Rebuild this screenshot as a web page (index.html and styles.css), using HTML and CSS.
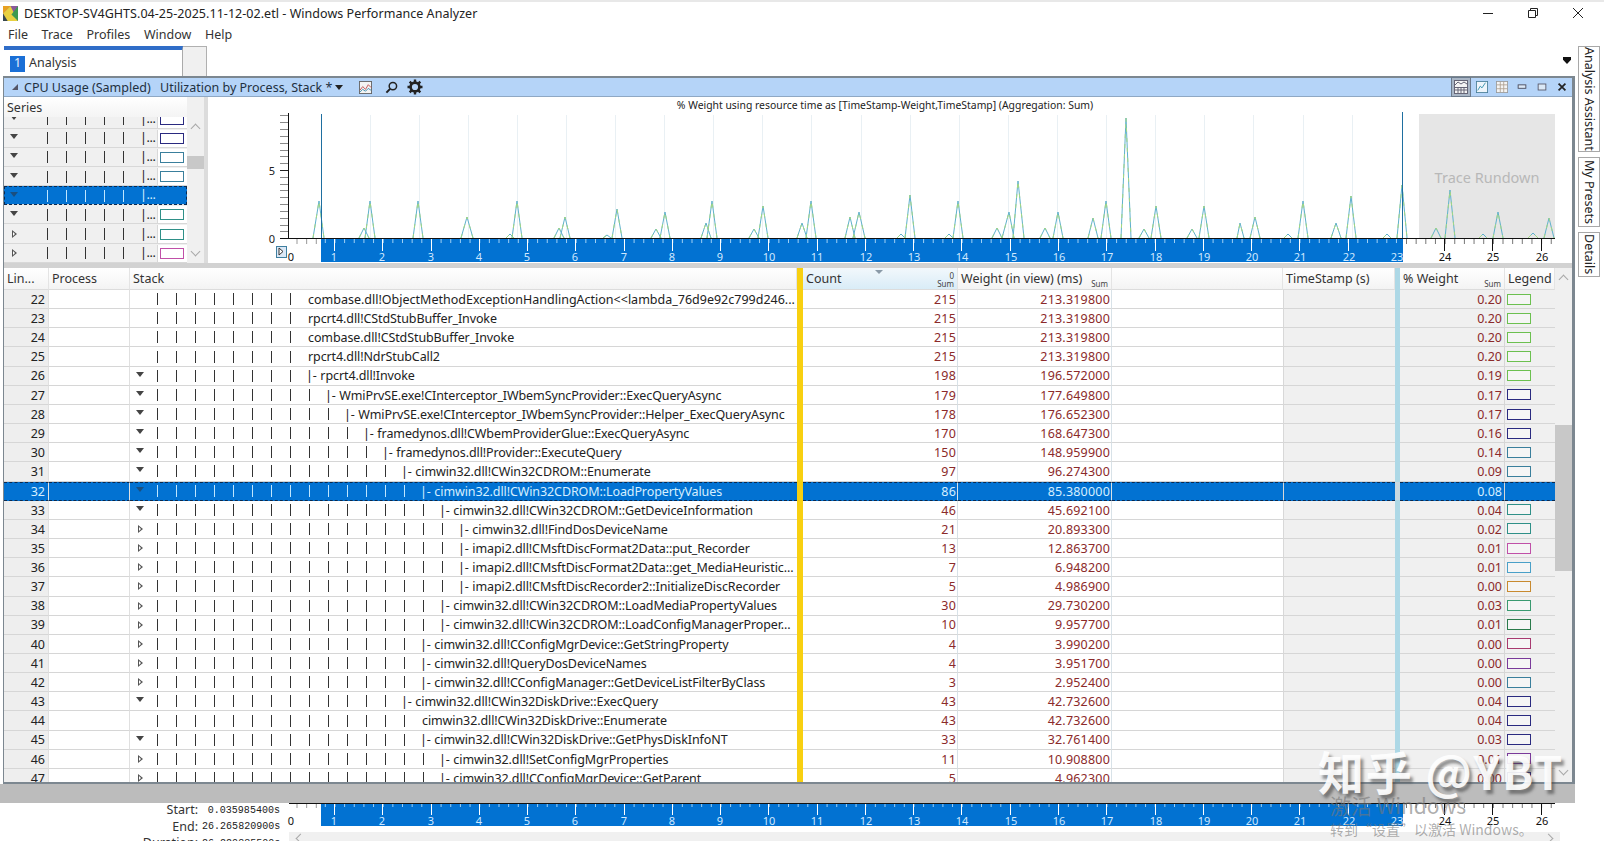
FILE: index.html
```html
<!DOCTYPE html>
<html lang="en">
<head>
<meta charset="utf-8">
<title>Windows Performance Analyzer</title>
<link rel="stylesheet" href="styles.css">
</head>
<body>
<div class="topstrip"></div>
<header class="titlebar">
  <svg class="appicon" viewBox="0 0 16 16"><rect width="16" height="16" fill="#8a5a9a"/><path d="M0 0h8L0 8z" fill="#e8a020"/><path d="M0 8L8 0l8 16H4z" fill="#e8d040"/><path d="M9 9l7-9v16z" fill="#3c9a50"/><path d="M0 8l5 8H0z" fill="#384850"/></svg>
  <span class="titletext">DESKTOP-SV4GHTS.04-25-2025.11-12-02.etl - Windows Performance Analyzer</span>
  <div class="winbtns">
    <svg viewBox="0 0 12 12"><path d="M1 6.5h10" stroke="#222" fill="none"/></svg>
    <svg viewBox="0 0 12 12"><path d="M1.5 3.5h7v7h-7zM3.5 3.5v-2h7v7h-2" stroke="#222" fill="none"/></svg>
    <svg viewBox="0 0 12 12"><path d="M1 1l10 10M11 1L1 11" stroke="#222" fill="none"/></svg>
  </div>
</header>
<nav class="menubar"><span>File</span><span>Trace</span><span>Profiles</span><span>Window</span><span>Help</span></nav>

<div class="shell">
  <div class="workspace">
    <div class="tabbar">
      <div class="tab"><b class="tabnum">1</b>Analysis</div>
      <div class="tabspare"></div>
      <i class="overflow"></i>
    </div>

    <section class="panel">
      <div class="panelhead">
        <i class="collapse"></i>
        <span class="ptitle">CPU Usage (Sampled)</span>
        <span class="ppreset">Utilization by Process, Stack *</span>
        <i class="caret"></i>
        <svg class="ico chartico" viewBox="0 0 14 14"><rect x=".5" y=".5" width="13" height="13" fill="#f4f4f4" stroke="#666"/><path d="M1 10l3-4 3 3 3-5 3 3" stroke="#c05050" fill="none"/><path d="M1 12l3-3 3 2 3-3 3 2" stroke="#4090b0" fill="none"/></svg>
        <svg class="ico searchico" viewBox="0 0 14 14"><circle cx="8.5" cy="5.5" r="4" fill="none" stroke="#222" stroke-width="1.6"/><path d="M5.5 8.5L1.5 12.5" stroke="#222" stroke-width="2.2"/></svg>
        <svg class="ico gearico" viewBox="0 0 16 16"><circle cx="8" cy="8" r="4.4" fill="none" stroke="#222" stroke-width="2.6"/><path d="M8 .5v3M8 12.5v3M.5 8h3M12.5 8h3M2.7 2.7l2.1 2.1M11.2 11.2l2.1 2.1M13.3 2.7l-2.1 2.1M4.8 11.2l-2.1 2.1" stroke="#222" stroke-width="2.4"/></svg>
        <div class="panelbtns">
          <span class="pbtn active"><svg viewBox="0 0 14 14"><rect x=".5" y=".5" width="13" height="13" fill="#f4f4f4" stroke="#667"/><path d="M1 5l3-3 3 2 3-2 3 2M1 7.5h12M1 10h12M4 7.5V13M7 7.5V13M10 7.5V13" stroke="#667" fill="none"/></svg></span>
          <span class="pbtn"><svg viewBox="0 0 14 14"><rect x=".5" y=".5" width="13" height="13" fill="#eef5fb" stroke="#4b7f98"/><path d="M2 11l3-5 2 2 4-6" stroke="#2a8aa8" fill="none"/></svg></span>
          <span class="pbtn"><svg viewBox="0 0 14 14"><rect x=".5" y=".5" width="13" height="13" fill="#f4f4f4" stroke="#9a9a9a"/><path d="M1 4.5h12M1 9h12M5 1v12M9 1v12" stroke="#b0a090" fill="none"/></svg></span>
          <span class="pbtn"><svg viewBox="0 0 14 14"><rect x="2.5" y="4.5" width="9" height="4" fill="#dbe8f6" stroke="#445"/></svg></span>
          <span class="pbtn"><svg viewBox="0 0 14 14"><rect x="2.5" y="3.5" width="9" height="7" fill="#dbe8f6" stroke="#556"/></svg></span>
          <span class="pbtn"><svg viewBox="0 0 14 14"><path d="M3 3l8 8M11 3l-8 8" stroke="#222" stroke-width="2"/></svg></span>
        </div>
      </div>

      <div class="graphrow">
        <div class="series">
          <div class="serieshead"><span>Series</span></div>
          <div class="seriesbody">
            <div class="srow"><i class="tw open"></i><i class="g d5"></i><span class="more">|...</span><span class="slg"><i class="sw c-navy"></i></span></div>
            <div class="srow"><i class="tw open"></i><i class="g d5"></i><span class="more">|...</span><span class="slg"><i class="sw c-navy"></i></span></div>
            <div class="srow"><i class="tw open"></i><i class="g d5"></i><span class="more">|...</span><span class="slg"><i class="sw c-steel"></i></span></div>
            <div class="srow"><i class="tw open"></i><i class="g d5"></i><span class="more">|...</span><span class="slg"><i class="sw c-steel"></i></span></div>
            <div class="srow sel"><i class="tw open"></i><i class="g d5"></i><span class="more">|...</span><span class="slg"></span></div>
            <div class="srow"><i class="tw open"></i><i class="g d5"></i><span class="more">|...</span><span class="slg"><i class="sw c-teal"></i></span></div>
            <div class="srow"><i class="tw closed"></i><i class="g d5"></i><span class="more">|...</span><span class="slg"><i class="sw c-teal"></i></span></div>
            <div class="srow"><i class="tw closed"></i><i class="g d5"></i><span class="more">|...</span><span class="slg"><i class="sw c-pink"></i></span></div>
          </div>
        </div>
        <div class="vscroll sscroll"><i class="chev up"></i><i class="thumb"></i><i class="chev down"></i></div>
        <div class="divider"></div>
        <svg class="chart" viewBox="208 97 1364 166">
          <defs>
            <path id="spikes" d="M313 238l6-37 5 37M359 238l5-10 5 10M365 238l5-37 5 37M413 238l5-37 5 37M461 238l6-21 6 21M506 238l4-4 4 4M512 238l5-37 5 37M554 238l5-10 5 10M560 238l5-21 5 21M603 238l4-3 4 3M612 238l5-29 5 29M651 238l5-9 5 9M660 238l5-26 5 26M701 238l5-15 5 15M707 238l5-37 5 37M749 238l5-9 5 9M758 238l5-32 5 32M797 238l5-15 5 15M806 238l5-37 5 37M845 238l5-21 5 21M853 238l6-26 6 26M897 238l4-4 4 4M905 238l5-43 5 43M945 238l4-4 4 4M953 238l5-37 5 37M992 238l5-10 5 10M1002 238l7-26 5 26M1013 238l5-57 6 57M1040 238l5-10 5 10M1053 238l5-26 5 26M1088 238l5-20 5 20M1101 238l5-37 5 37M1121 238l5-120 5 120M1139 238l5-9 5 9M1151 238l5-32 5 32M1187 238l5-9 5 9M1199 238l5-32 5 32M1237 238l3-15 4 15M1250 238l5-21 5 21M1284 238l4-4 4 4M1298 238l5-37 5 37M1331 238l5-15 5 15M1346 238l5-42 5 42M1383 238l4-4 4 4M1397 238l5-53 5 53M1431 238l5-10 5 10M1445 238l5-48 5 48M1479 238l4-4 4 4M1493 238l5-26 5 26M1528 238l5-5 5 5M1544 238l5-20 5 20"/>
          </defs>
          <text class="charttitle" x="885" y="109">% Weight using resource time as [TimeStamp-Weight,TimeStamp] (Aggregation: Sum)</text>
          <rect x="1419" y="114" width="136" height="124" fill="#e6e6e6"/>
          <text class="rundown" x="1487" y="183">Trace Rundown</text>
          <path d="M370.5 115v123M419.5 115v123M468.5 115v123M517.5 115v123M566.5 115v123M615.5 115v123M664.5 115v123M713.5 115v123M762.5 115v123M811.5 115v123M861.5 115v123M910.5 115v123M959.5 115v123M1008.5 115v123M1057.5 115v123M1106.5 115v123M1155.5 115v123M1204.5 115v123M1253.5 115v123M1303.5 115v123M1352.5 115v123" stroke="#e9f0f4" fill="none"/>
          <use href="#spikes" class="spike blue"/>
          <use href="#spikes" class="spike green"/>
          <path d="M321.5 114v125M1402.5 112v127" stroke="#1f6fa0" fill="none"/>
          <path d="M288.5 113v125.500M280 238.500h1275" stroke="#111" fill="none"/>
          <path d="M280 115.500h8M280 122.500h8M280 129.500h8M280 136.500h8M280 143.500h8M280 150.500h8M280 156.500h8M280 163.500h8M280 177.500h8M280 184.500h8M280 190.500h8M280 197.500h8M280 204.500h8M280 211.500h8M280 218.500h8M280 225.500h8M280 231.500h8" stroke="#8a8a8a" fill="none"/>
          <path d="M280 170.500h8" stroke="#222" fill="none"/>
          <text class="axis" x="272" y="175">5</text>
          <text class="axis" x="272" y="243">0</text>
          <rect x="276.500" y="246.500" width="10" height="11" fill="#dbe8f6" stroke="#3f7fa0"/>
          <path d="M279 248l4 3.500-4 3.500z" fill="#fff" stroke="#333"/>
          <g id="ruler" transform="translate(0 239)">
            <rect x="321" y="0" width="1082" height="23" fill="#0272d2"/>
            <line x1="296.500" x2="321" y1="2.500" y2="2.500" stroke="#999" stroke-width="5" stroke-dasharray="1 8.650"/>
            <line x1="324.800" x2="1403" y1="2" y2="2" stroke="#9fd0f5" stroke-width="4" stroke-dasharray="1 8.650"/>
            <line x1="1406" x2="1555" y1="2.500" y2="2.500" stroke="#777" stroke-width="5" stroke-dasharray="1 8.650"/>
            <path class="maj white" d="M334.500 0v12M382.500 0v12M431.500 0v12M479.500 0v12M527.500 0v12M575.500 0v12M624.500 0v12M672.500 0v12M720.500 0v12M768.500 0v12M817.500 0v12M865.500 0v12M913.500 0v12M961.500 0v12M1010.500 0v12M1058.500 0v12M1106.500 0v12M1155.500 0v12M1203.500 0v12M1251.500 0v12M1299.500 0v12M1348.500 0v12"/>
            <path class="maj dark" d="M1444.500 0v12M1492.500 0v12M1541.500 0v12"/>
            <g class="rl white">
              <text x="334" y="22">1</text><text x="382" y="22">2</text><text x="431" y="22">3</text><text x="479" y="22">4</text><text x="527" y="22">5</text><text x="575" y="22">6</text><text x="624" y="22">7</text><text x="672" y="22">8</text><text x="720" y="22">9</text><text x="769" y="22">10</text><text x="817" y="22">11</text><text x="866" y="22">12</text><text x="914" y="22">13</text><text x="962" y="22">14</text><text x="1011" y="22">15</text><text x="1059" y="22">16</text><text x="1107" y="22">17</text><text x="1156" y="22">18</text><text x="1204" y="22">19</text><text x="1252" y="22">20</text><text x="1300" y="22">21</text><text x="1349" y="22">22</text><text x="1397" y="22">23</text>
            </g>
            <g class="rl dark">
              <text x="291" y="22">0</text><text x="1445" y="22">24</text><text x="1493" y="22">25</text><text x="1542" y="22">26</text>
            </g>
          </g>
        </svg>
      </div>

      <div class="sash"></div>

      <div class="tablewrap">
        <div class="grid">
          <div class="row head">
            <span>Lin...</span><span>Process</span><span>Stack</span><i class="ybar"></i>
            <span class="sortcol">Count<i class="sort"></i><em class="sum"><u>0</u>Sum</em></span>
            <span>Weight (in view) (ms)<em class="sum">Sum</em></span>
            <span></span><span>TimeStamp (s)</span><i class="bbar"></i>
            <span>% Weight<em class="sum">Sum</em></span><span>Legend</span>
          </div>
          <div class="row"><span class="ln">22</span><span class="proc"></span><span class="stack"><i class="tw"></i><i class="g d8"></i><span class="nm flat">combase.dll!ObjectMethodExceptionHandlingAction&lt;&lt;lambda_76d9e92c799d246...</span></span><i class="ybar"></i><span class="num">215</span><span class="num">213.319800</span><span class="blank"></span><span class="ts"></span><i class="bbar"></i><span class="pct">0.20</span><span class="lg"><i class="sw c-green"></i></span></div>
          <div class="row"><span class="ln">23</span><span class="proc"></span><span class="stack"><i class="tw"></i><i class="g d8"></i><span class="nm">rpcrt4.dll!CStdStubBuffer_Invoke</span></span><i class="ybar"></i><span class="num">215</span><span class="num">213.319800</span><span class="blank"></span><span class="ts"></span><i class="bbar"></i><span class="pct">0.20</span><span class="lg"><i class="sw c-green"></i></span></div>
          <div class="row"><span class="ln">24</span><span class="proc"></span><span class="stack"><i class="tw"></i><i class="g d8"></i><span class="nm">combase.dll!CStdStubBuffer_Invoke</span></span><i class="ybar"></i><span class="num">215</span><span class="num">213.319800</span><span class="blank"></span><span class="ts"></span><i class="bbar"></i><span class="pct">0.20</span><span class="lg"><i class="sw c-green"></i></span></div>
          <div class="row"><span class="ln">25</span><span class="proc"></span><span class="stack"><i class="tw"></i><i class="g d8"></i><span class="nm">rpcrt4.dll!NdrStubCall2</span></span><i class="ybar"></i><span class="num">215</span><span class="num">213.319800</span><span class="blank"></span><span class="ts"></span><i class="bbar"></i><span class="pct">0.20</span><span class="lg"><i class="sw c-green"></i></span></div>
          <div class="row"><span class="ln">26</span><span class="proc"></span><span class="stack"><i class="tw open"></i><i class="g d8"></i><span class="nm">|- rpcrt4.dll!Invoke</span></span><i class="ybar"></i><span class="num">198</span><span class="num">196.572000</span><span class="blank"></span><span class="ts"></span><i class="bbar"></i><span class="pct">0.19</span><span class="lg"><i class="sw c-green"></i></span></div>
          <div class="row"><span class="ln">27</span><span class="proc"></span><span class="stack"><i class="tw open"></i><i class="g d9"></i><span class="nm">|- WmiPrvSE.exe!CInterceptor_IWbemSyncProvider::ExecQueryAsync</span></span><i class="ybar"></i><span class="num">179</span><span class="num">177.649800</span><span class="blank"></span><span class="ts"></span><i class="bbar"></i><span class="pct">0.17</span><span class="lg"><i class="sw c-navy"></i></span></div>
          <div class="row"><span class="ln">28</span><span class="proc"></span><span class="stack"><i class="tw open"></i><i class="g d10"></i><span class="nm">|- WmiPrvSE.exe!CInterceptor_IWbemSyncProvider::Helper_ExecQueryAsync</span></span><i class="ybar"></i><span class="num">178</span><span class="num">176.652300</span><span class="blank"></span><span class="ts"></span><i class="bbar"></i><span class="pct">0.17</span><span class="lg"><i class="sw c-navy"></i></span></div>
          <div class="row"><span class="ln">29</span><span class="proc"></span><span class="stack"><i class="tw open"></i><i class="g d11"></i><span class="nm">|- framedynos.dll!CWbemProviderGlue::ExecQueryAsync</span></span><i class="ybar"></i><span class="num">170</span><span class="num">168.647300</span><span class="blank"></span><span class="ts"></span><i class="bbar"></i><span class="pct">0.16</span><span class="lg"><i class="sw c-navy"></i></span></div>
          <div class="row"><span class="ln">30</span><span class="proc"></span><span class="stack"><i class="tw open"></i><i class="g d12"></i><span class="nm">|- framedynos.dll!Provider::ExecuteQuery</span></span><i class="ybar"></i><span class="num">150</span><span class="num">148.959900</span><span class="blank"></span><span class="ts"></span><i class="bbar"></i><span class="pct">0.14</span><span class="lg"><i class="sw c-steel"></i></span></div>
          <div class="row"><span class="ln">31</span><span class="proc"></span><span class="stack"><i class="tw open"></i><i class="g d13"></i><span class="nm">|- cimwin32.dll!CWin32CDROM::Enumerate</span></span><i class="ybar"></i><span class="num">97</span><span class="num">96.274300</span><span class="blank"></span><span class="ts"></span><i class="bbar"></i><span class="pct">0.09</span><span class="lg"><i class="sw c-steel"></i></span></div>
          <div class="row sel"><span class="ln">32</span><span class="proc"></span><span class="stack"><i class="tw open"></i><i class="g d14"></i><span class="nm">|- cimwin32.dll!CWin32CDROM::LoadPropertyValues</span></span><i class="ybar"></i><span class="num">86</span><span class="num">85.380000</span><span class="blank"></span><span class="ts"></span><i class="bbar"></i><span class="pct">0.08</span><span class="lg"></span></div>
          <div class="row"><span class="ln">33</span><span class="proc"></span><span class="stack"><i class="tw open"></i><i class="g d15"></i><span class="nm">|- cimwin32.dll!CWin32CDROM::GetDeviceInformation</span></span><i class="ybar"></i><span class="num">46</span><span class="num">45.692100</span><span class="blank"></span><span class="ts"></span><i class="bbar"></i><span class="pct">0.04</span><span class="lg"><i class="sw c-teal"></i></span></div>
          <div class="row"><span class="ln">34</span><span class="proc"></span><span class="stack"><i class="tw closed"></i><i class="g d16"></i><span class="nm">|- cimwin32.dll!FindDosDeviceName</span></span><i class="ybar"></i><span class="num">21</span><span class="num">20.893300</span><span class="blank"></span><span class="ts"></span><i class="bbar"></i><span class="pct">0.02</span><span class="lg"><i class="sw c-teal"></i></span></div>
          <div class="row"><span class="ln">35</span><span class="proc"></span><span class="stack"><i class="tw closed"></i><i class="g d16"></i><span class="nm">|- imapi2.dll!CMsftDiscFormat2Data::put_Recorder</span></span><i class="ybar"></i><span class="num">13</span><span class="num">12.863700</span><span class="blank"></span><span class="ts"></span><i class="bbar"></i><span class="pct">0.01</span><span class="lg"><i class="sw c-pink"></i></span></div>
          <div class="row"><span class="ln">36</span><span class="proc"></span><span class="stack"><i class="tw closed"></i><i class="g d16"></i><span class="nm">|- imapi2.dll!CMsftDiscFormat2Data::get_MediaHeuristic...</span></span><i class="ybar"></i><span class="num">7</span><span class="num">6.948200</span><span class="blank"></span><span class="ts"></span><i class="bbar"></i><span class="pct">0.01</span><span class="lg"><i class="sw c-sky"></i></span></div>
          <div class="row"><span class="ln">37</span><span class="proc"></span><span class="stack"><i class="tw closed"></i><i class="g d16"></i><span class="nm">|- imapi2.dll!CMsftDiscRecorder2::InitializeDiscRecorder</span></span><i class="ybar"></i><span class="num">5</span><span class="num">4.986900</span><span class="blank"></span><span class="ts"></span><i class="bbar"></i><span class="pct">0.00</span><span class="lg"><i class="sw c-orange"></i></span></div>
          <div class="row"><span class="ln">38</span><span class="proc"></span><span class="stack"><i class="tw closed"></i><i class="g d15"></i><span class="nm">|- cimwin32.dll!CWin32CDROM::LoadMediaPropertyValues</span></span><i class="ybar"></i><span class="num">30</span><span class="num">29.730200</span><span class="blank"></span><span class="ts"></span><i class="bbar"></i><span class="pct">0.03</span><span class="lg"><i class="sw c-seagreen"></i></span></div>
          <div class="row"><span class="ln">39</span><span class="proc"></span><span class="stack"><i class="tw closed"></i><i class="g d15"></i><span class="nm">|- cimwin32.dll!CWin32CDROM::LoadConfigManagerProper...</span></span><i class="ybar"></i><span class="num">10</span><span class="num">9.957700</span><span class="blank"></span><span class="ts"></span><i class="bbar"></i><span class="pct">0.01</span><span class="lg"><i class="sw c-forest"></i></span></div>
          <div class="row"><span class="ln">40</span><span class="proc"></span><span class="stack"><i class="tw closed"></i><i class="g d14"></i><span class="nm">|- cimwin32.dll!CConfigMgrDevice::GetStringProperty</span></span><i class="ybar"></i><span class="num">4</span><span class="num">3.990200</span><span class="blank"></span><span class="ts"></span><i class="bbar"></i><span class="pct">0.00</span><span class="lg"><i class="sw c-rose"></i></span></div>
          <div class="row"><span class="ln">41</span><span class="proc"></span><span class="stack"><i class="tw closed"></i><i class="g d14"></i><span class="nm">|- cimwin32.dll!QueryDosDeviceNames</span></span><i class="ybar"></i><span class="num">4</span><span class="num">3.951700</span><span class="blank"></span><span class="ts"></span><i class="bbar"></i><span class="pct">0.00</span><span class="lg"><i class="sw c-purple"></i></span></div>
          <div class="row"><span class="ln">42</span><span class="proc"></span><span class="stack"><i class="tw closed"></i><i class="g d14"></i><span class="nm">|- cimwin32.dll!CConfigManager::GetDeviceListFilterByClass</span></span><i class="ybar"></i><span class="num">3</span><span class="num">2.952400</span><span class="blank"></span><span class="ts"></span><i class="bbar"></i><span class="pct">0.00</span><span class="lg"><i class="sw c-steel"></i></span></div>
          <div class="row"><span class="ln">43</span><span class="proc"></span><span class="stack"><i class="tw open"></i><i class="g d13"></i><span class="nm">|- cimwin32.dll!CWin32DiskDrive::ExecQuery</span></span><i class="ybar"></i><span class="num">43</span><span class="num">42.732600</span><span class="blank"></span><span class="ts"></span><i class="bbar"></i><span class="pct">0.04</span><span class="lg"><i class="sw c-navy"></i></span></div>
          <div class="row"><span class="ln">44</span><span class="proc"></span><span class="stack"><i class="tw"></i><i class="g d14"></i><span class="nm">cimwin32.dll!CWin32DiskDrive::Enumerate</span></span><i class="ybar"></i><span class="num">43</span><span class="num">42.732600</span><span class="blank"></span><span class="ts"></span><i class="bbar"></i><span class="pct">0.04</span><span class="lg"><i class="sw c-navy"></i></span></div>
          <div class="row"><span class="ln">45</span><span class="proc"></span><span class="stack"><i class="tw open"></i><i class="g d14"></i><span class="nm">|- cimwin32.dll!CWin32DiskDrive::GetPhysDiskInfoNT</span></span><i class="ybar"></i><span class="num">33</span><span class="num">32.761400</span><span class="blank"></span><span class="ts"></span><i class="bbar"></i><span class="pct">0.03</span><span class="lg"><i class="sw c-navy"></i></span></div>
          <div class="row"><span class="ln">46</span><span class="proc"></span><span class="stack"><i class="tw closed"></i><i class="g d15"></i><span class="nm">|- cimwin32.dll!SetConfigMgrProperties</span></span><i class="ybar"></i><span class="num">11</span><span class="num">10.908800</span><span class="blank"></span><span class="ts"></span><i class="bbar"></i><span class="pct">0.01</span><span class="lg"><i class="sw c-purple"></i></span></div>
          <div class="row"><span class="ln">47</span><span class="proc"></span><span class="stack"><i class="tw closed"></i><i class="g d15"></i><span class="nm">|- cimwin32.dll!CConfigMgrDevice::GetParent</span></span><i class="ybar"></i><span class="num">5</span><span class="num">4.962300</span><span class="blank"></span><span class="ts"></span><i class="bbar"></i><span class="pct">0.00</span><span class="lg"><i class="sw c-navy"></i></span></div>
        </div>
        <div class="vscroll tscroll"><i class="chev up"></i><i class="thumb"></i><i class="chev down"></i></div>
      </div>
    </section>

    <div class="band"></div>

    <footer class="timeline">
      <dl class="range">
        <div><dt>Start:</dt><dd>0.035985400s</dd></div>
        <div><dt>End:</dt><dd>26.265820900s</dd></div>
        <div><dt>Duration:</dt><dd>26.229835500s</dd></div>
      </dl>
      <div class="overview">
        <svg class="ovsvg" viewBox="280 0 1290 24"><use href="#ruler" transform="translate(0 -239)"/><path d="M289 .5h1266" stroke="#111" fill="none"/></svg>
        <div class="hscroll"><i class="chev left"></i><i class="chev right"></i></div>
      </div>
    </footer>
  </div>

  <aside class="rail">
    <span class="railtab">Analysis Assistant</span>
    <span class="railtab">My Presets</span>
    <span class="railtab">Details</span>
  </aside>
</div>

<div class="activate"><p class="a1">激活 Windows</p><p class="a2">转到“设置”以激活 Windows。</p></div>
<div class="watermark">知乎 @YBT</div>
</body>
</html>
```

FILE: styles.css
```css
* { box-sizing: border-box; }
html, body { margin: 0; padding: 0; }
body {
  width: 1604px; height: 841px; overflow: hidden; position: relative;
  background: #fff; color: #222;
  font: 12.5px/1 "Noto Sans", "Noto Sans CJK SC", sans-serif;
}
i, em, u { font-style: normal; text-decoration: none; display: block; }

.topstrip { height: 2px; background: #e8e8e8; }
.titlebar { height: 22px; display: flex; align-items: center; padding-left: 3px; }
.appicon { width: 15px; height: 15px; margin-right: 6px; flex: none; }
.titletext { font-size: 12.5px; color: #222; letter-spacing: .04px; padding-top: 2px; }
.winbtns { margin-left: auto; display: flex; gap: 33px; padding-right: 20px; }
.winbtns svg { width: 12px; height: 12px; display: block; }
.menubar { height: 22px; display: flex; align-items: center; padding-left: 8px; gap: 13.6px; font-size: 12.5px; color: #333; }

.shell { display: flex; height: 795px; }
.workspace { width: 1575px; flex: none; display: flex; flex-direction: column; }
.rail { flex: 1; padding: 0 4px 0 3px; display: flex; flex-direction: column; gap: 5px; }
.railtab {
  writing-mode: vertical-rl; border: 1px solid #a8a8a8; background: #fff; white-space: nowrap;
  text-align: center; padding: 0; width: 22px; font-size: 12.5px; line-height: 20px; color: #222;
}
.railtab:nth-child(1) { height: 106px; }
.railtab:nth-child(2) { height: 70px; }
.railtab:nth-child(3) { height: 45px; }

.tabbar { height: 30px; display: flex; align-items: stretch; padding-left: 4px; position: relative; }
.tab {
  width: 179px; border-top: 4px solid #2f6dc8; border-right: 1px solid #aaa; background: #fff;
  display: flex; align-items: center; padding-left: 6px; padding-top: 1px; font-size: 12.5px; color: #333;
}
.tabnum {
  width: 15px; height: 16px; background: #1a6fd6; color: #e8f2ff; font-weight: 400;
  display: flex; align-items: center; justify-content: center; margin-right: 4px;
}
.tabspare { width: 24px; background: #f0f0f0; border: 1px solid #b0b0b0; border-left: 0; border-bottom: 0; }
.overflow {
  position: absolute; right: 4px; top: 11px; width: 8px; height: 7px;
  clip-path: polygon(0 0, 100% 0, 100% 40%, 50% 100%, 0 40%);
  background: #111;
}

.panel {
  margin-left: 3px; width: 1572px; flex: none; height: 708px;
  border: solid #7c8790; border-width: 2px 3px 2px 1px;
  display: flex; flex-direction: column; background: #fff;
}
.panelhead {
  height: 19px; flex: none; background: #b5d4f8; border-bottom: 1px solid #8fa8c4;
  display: flex; align-items: center; color: #222; padding-left: 8px; font-size: 12.5px;
}
.collapse { width: 0; height: 0; border-right: 6px solid #556; border-top: 6px solid transparent; margin-right: 6px; }
.ptitle { width: 136px; flex: none; color: #1f3040; padding-top: 2px; }
.ppreset { width: 175px; flex: none; color: #1f3040; padding-top: 2px; }
.caret { width: 0; height: 0; border: 4px solid transparent; border-top: 5px solid #222; border-bottom: 0; margin-right: 16px; }
.ico { display: block; flex: none; }
.chartico { width: 13px; height: 13px; margin-right: 13px; }
.searchico { width: 13px; height: 13px; margin-right: 9px; }
.gearico { width: 16px; height: 16px; }
.panelbtns { margin-left: auto; display: flex; align-items: center; padding-right: 2px; gap: 4px; }
.pbtn { width: 16px; height: 16px; display: flex; align-items: center; justify-content: center; }
.pbtn svg { width: 12px; height: 12px; display: block; }
.pbtn.active { width: 18px; height: 18px; background: #a9b6c6; outline: 1px solid #6b7a8c; margin-right: 0; }
.pbtn.active svg { width: 14px; height: 14px; }

.graphrow { height: 166px; flex: none; display: flex; }
.series { width: 183px; flex: none; display: flex; flex-direction: column; background: #f0f0f0; }
.serieshead { height: 20px; flex: none; background: linear-gradient(#fff, #f4f4f4); display: flex; align-items: center; padding-left: 3px; padding-top: 2px; color: #333; }
.seriesbody { flex: 1; overflow: hidden; }
.srow {
  height: 19.17px; display: flex; align-items: center; padding-left: 6px; padding-top: 1px;
  border-bottom: 1px solid #d8d8d8; position: relative;
}
.srow:first-child { margin-top: -7.5px; }
.srow .tw { width: 37px; }
.more { width: 15px; flex: none; color: #222; margin-left: -2px; letter-spacing: -.4px; }
.slg { width: 30px; height: 100%; flex: none; margin-left: auto; background: #fff; display: flex; align-items: center; padding-left: 2px; border-left: 1px solid #d8d8d8; }
.srow.sel { background: #0272d2; outline: 1px dashed #0a2a50; outline-offset: -1px; }
.srow.sel .more { color: #d6efff; }
.srow.sel .slg { background: transparent; border: 0; }
.srow.sel .g { --guide: #bfe6ff; }
.srow.sel .tw.open::before { border-top-color: #1a4f80; }

.vscroll { flex: none; background: #f0f0f0; position: relative; width: 17px; }
.sscroll .thumb { position: absolute; left: 0; right: 0; top: 59px; height: 13px; background: #c8c8c8; }
.tscroll { width: 17px; background: #f0f0f0; }
.tscroll .thumb { position: absolute; left: 0; right: 0; top: 157px; height: 146px; background: #c8c8c8; }
.chev { position: absolute; left: 5px; width: 7px; height: 7px; border: solid #a8a8a8; border-width: 1px 0 0 1px; }
.chev.up { top: 8px; transform: rotate(45deg); }
.sscroll .chev.up { top: 28px; }
.chev.down { bottom: 8px; transform: rotate(225deg); }
.divider { width: 4px; flex: none; background: #dcdcdc; }
.chart { width: 1364px; height: 166px; flex: none; display: block; background: #fff; }
.charttitle { font: 10.4px "Noto Sans", sans-serif; fill: #222; text-anchor: middle; }
.rundown { font: 14.5px "Noto Sans", sans-serif; fill: #b8b8b8; text-anchor: middle; }
.axis { font: 11px "Noto Sans", sans-serif; fill: #222; text-anchor: middle; }
.spike { fill: none; stroke-width: 1; }
.spike.green { stroke: #a2d884; stroke-dasharray: 4 6; }
.spike.blue { stroke: #5fb0cc; }
.maj { stroke-width: 1; fill: none; }
.maj.white { stroke: #fff; }
.maj.dark { stroke: #111; }
.rl text { font: 11px "Noto Sans", sans-serif; text-anchor: middle; }
.rl.white text { fill: #cfe8ff; }
.rl.dark text { fill: #111; }

.sash { height: 5px; flex: none; background: #d2d2d2; }
.tablewrap { flex: 1; min-height: 0; display: flex; overflow: hidden; }
.grid { width: 1551px; flex: none; overflow: hidden; }
.tablewrap .vscroll { width: 17px; }
.row {
  display: grid; height: 19.17px;
  grid-template-columns: 45px 81px 667px 6px 155px 154px 171px 112px 5px 105px 50px;
  align-items: stretch;
}
.row > * { display: flex; align-items: center; padding-top: 2px; border-bottom: 1px solid #d6d6d6; white-space: nowrap; overflow: hidden; min-width: 0; }
.row.head { height: 22px; background: linear-gradient(#fff, #f3f3f3); color: #333; }
.row.head > span { padding-left: 3px; position: relative; border-right: 1px solid #e4e4e4; border-bottom: 1px solid #dcdcdc; }
.sortcol { background: linear-gradient(#f2f8fc, #d9ecf7); }
.sort { position: absolute; left: 72px; top: 2px; width: 0; height: 0; border: 4px solid transparent; border-top: 4px solid #8a9aa8; border-bottom: 0; }
.sum { position: absolute; right: 3px; bottom: 1px; font-size: 8px; color: #444; text-align: right; line-height: 8px; }
.sum u { font-size: 8px; }

.ln { background: #eee; justify-content: flex-end; padding-right: 3px; color: #222; border-right: 1px solid #e0e0e0; }
.proc { border-right: 1px solid #e0e0e0; }
.stack { padding-left: 6px; padding-top: 0 !important; }
.stack .nm { padding-top: 2px; }
.nm { margin-left: -3px; color: #222; letter-spacing: -.1px; word-spacing: .5px; }
.tw:not(.open):not(.closed) ~ .nm { margin-left: -1px; }
.nm.flat { letter-spacing: 0; }
.ybar { background: #f8d010; border-bottom-color: #f8d010 !important; }
.bbar { background: #add8e6; border-bottom-color: #add8e6 !important; }
.num { justify-content: flex-end; padding-right: 1px; color: #8b2a2a; letter-spacing: .2px; border-right: 1px solid #d8e2e8; }
.ts { background: #f0f0f0; border-left: 1px solid #d8d8d8; }
.pct { background: #f0f0f0; justify-content: flex-end; padding-right: 2px; color: #8b2a2a; border-right: 1px solid #d6d6d6; }
.lg { background: #f0f0f0; padding-left: 2px; padding-top: 0 !important; }
.sw { width: 24px; height: 11px; border: 1px solid #888; flex: none; background: rgba(255,255,255,.35); }
.c-green { border-color: #6cc050; }
.c-navy { border-color: #2a2a80; }
.c-steel { border-color: #3a7f9c; }
.c-teal { border-color: #2f9088; }
.c-pink { border-color: #c050a8; }
.c-sky { border-color: #4aa0c8; }
.c-orange { border-color: #c88a30; }
.c-seagreen { border-color: #3a9a70; }
.c-forest { border-color: #2a7a4a; }
.c-rose { border-color: #a83a70; }
.c-purple { border-color: #7a3a9a; }

.tw { width: 21px; flex: none; display: block; position: relative; height: 12px; }
.tw.open::before {
  content: ""; position: absolute; left: 0; top: 2px; width: 0; height: 0;
  border: solid transparent; border-width: 5px 4px 0; border-top-color: #444;
}
.tw.closed::before {
  content: ""; position: absolute; left: 2px; top: 2px; width: 0; height: 0;
  border: solid transparent; border-width: 4px 0 4px 5px; border-left-color: #555;
}
.tw.closed::after {
  content: ""; position: absolute; left: 3px; top: 4px; width: 0; height: 0;
  border: solid transparent; border-width: 2px 0 2px 2.5px; border-left-color: #fff;
}
.g {
  --guide: #333; flex: none; height: 100%; display: block;
  background: linear-gradient(to right, var(--guide) 1px, transparent 1px) 0 center / 19px 12px repeat-x;
}
.d5 { width: 95px; }
.d8 { width: 152px; }
.d9 { width: 171px; }
.d10 { width: 190px; }
.d11 { width: 209px; }
.d12 { width: 228px; }
.d13 { width: 247px; }
.d14 { width: 266px; }
.d15 { width: 285px; }
.d16 { width: 304px; }

.row.sel > * { background: #0272d2; color: #d6efff; border-top: 1px dashed #0a2a50; border-bottom: 1px dashed #0a2a50; }
.row.sel > .ybar { background: #f8d010; border-color: #f8d010; }
.row.sel > .bbar { background: #c8d8e0; border-color: #c8d8e0; }
.row.sel .nm { color: #d6efff; }
.row.sel .g { --guide: #bfe6ff; }
.row.sel .tw.open::before { border-top-color: #1a4f80; }

.band { height: 19px; flex: none; background: #bcbcbc; }
.timeline { flex: 1; min-height: 0; display: flex; background: #fff; overflow: hidden; }
.range { width: 280px; flex: none; margin: -2px 0 0; padding-top: 1px; }
.range div { display: flex; justify-content: flex-end; align-items: center; height: 16.5px; }
.range dt { color: #333; }
.range dd { margin: 0 0 0 4px; width: 78px; text-align: right; font: 10px "Liberation Mono", monospace; letter-spacing: .02px; color: #222; }
.overview { flex: 1; min-width: 0; }
.ovsvg { width: 1290px; height: 24px; display: block; }
.hscroll { margin: 5px 15px 0 9px; height: 12px; background: #f0f0f0; position: relative; }
.chev.left { left: 8px; top: 3px; transform: rotate(-45deg); }
.chev.right { left: auto; right: 8px; top: 3px; transform: rotate(135deg); }

.watermark {
  position: absolute; left: 1318px; top: 742px; white-space: nowrap;
  font: 700 46px/56px "Noto Sans CJK SC", sans-serif; letter-spacing: 1.7px;
  color: rgba(255,255,255,.92); text-shadow: 3px 4px 3px rgba(60,60,60,.55);
}
.activate { position: absolute; left: 1330px; top: 792px; color: rgba(120,120,120,.6); font-family: "Noto Sans CJK SC", sans-serif; }
.activate p { margin: 0; white-space: nowrap; }
.a1 { font-size: 21px; line-height: 26px; }
.a2 { font-size: 14px; line-height: 22px; }
```
